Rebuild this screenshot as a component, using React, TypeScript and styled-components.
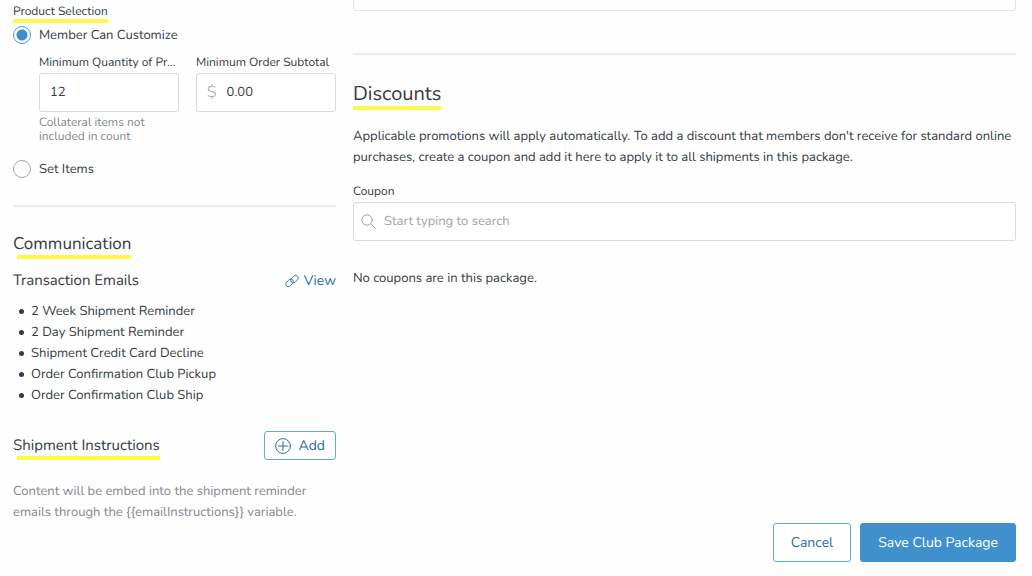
import React from "react";
import styled, { createGlobalStyle } from "styled-components";

const GlobalStyle = createGlobalStyle`
  *, *::before, *::after { box-sizing: border-box; }
  body {
    margin: 0;
    background: #fefefe;
    color: #343c43;
    font-family: "Nunito", "Open Sans", "Noto Sans", sans-serif;
    font-size: 13px;
    line-height: 21px;
    text-rendering: geometricPrecision;
  }
  h2, h3, h4, p, ul, fieldset, legend { margin: 0; padding: 0; border: 0; font-weight: 400; }
  input, button { font: inherit; color: inherit; text-rendering: inherit; }
`;

const Page = styled.main`
  display: flex;
  flex-direction: column;
  min-height: 100vh;
  padding: 0 16px 15px 13px;
`;

const Columns = styled.div`
  display: grid;
  grid-template-columns: repeat(12, minmax(0, 1fr));
  column-gap: 17px;
  align-items: start;
`;

const Column = styled.div<{ $span: number }>`
  grid-column: span ${(p) => p.$span};
  min-width: 0;
`;

const Highlight = styled.span<{ $inset?: number }>`
  position: relative;
  display: inline-block;
  white-space: nowrap;
  &::after {
    content: "";
    position: absolute;
    left: ${(p) => p.$inset ?? 0}px;
    right: 0;
    bottom: -4px;
    height: 4px;
    background: #fdf84a;
  }
`;

const Options = styled.fieldset`
  min-width: 0;
`;

const Legend = styled.legend`
  padding: 5px 0 4px;
  font-size: 12px;
  line-height: 14px;
`;

const Option = styled.label`
  display: flex;
  align-items: center;
  gap: 8px;
  height: 24px;
`;

const Radio = styled.input.attrs({ type: "radio" })`
  appearance: none;
  flex: none;
  width: 18px;
  height: 18px;
  margin: 0;
  border: 1px solid #a3a7aa;
  border-radius: 50%;
  background: #fff;
  &:checked {
    border-color: #4c9ad3;
    background: radial-gradient(circle, #3d8fcc 5px, #fff 6px);
  }
`;

const FieldRow = styled.div`
  display: grid;
  grid-template-columns: repeat(2, minmax(0, 1fr));
  gap: 17px;
  padding: 6px 0 13px 26px;
`;

const Label = styled.label`
  display: block;
  overflow: hidden;
  font-size: 12px;
  line-height: 20px;
  text-overflow: ellipsis;
  white-space: nowrap;
`;

const InputBox = styled.div`
  display: flex;
  align-items: center;
  gap: 10px;
  height: 39px;
  padding: 0 10px;
  border: 1px solid #d9dbdc;
  border-radius: 3px;
  background: #fff;
  color: #a0a4a7;
`;

const Input = styled.input`
  flex: 1;
  width: 100%;
  min-width: 0;
  padding: 0;
  border: 0;
  outline: 0;
  background: transparent;
  color: #343c43;
  &::placeholder { color: #a0a4a7; opacity: 1; }
`;

const SearchBox = styled(InputBox)`
  padding: 0 7px;
  gap: 8px;
`;

const Prefix = styled.span`
  font-size: 16px;
  font-weight: 300;
`;

const Help = styled.p`
  max-width: 120px;
  padding-top: 4px;
  color: #83888c;
  font-size: 12px;
  line-height: 14px;
`;

const Divider = styled.hr<{ $top: number; $bottom: number }>`
  height: 2px;
  margin: ${(p) => p.$top}px 0 ${(p) => p.$bottom}px;
  border: 0;
  background: #ececed;
`;

const Title = styled.h2`
  font-size: 20px;
  line-height: 23px;
`;

const Subtitle = styled.h3`
  font-size: 17px;
  line-height: 20px;
`;

const SmallTitle = styled.h4`
  font-size: 15px;
  line-height: 20px;
`;

const HeadRow = styled.div<{ $top: number }>`
  display: flex;
  align-items: center;
  justify-content: space-between;
  min-height: 29px;
  margin-top: ${(p) => p.$top}px;
`;

const ViewLink = styled.a`
  display: flex;
  align-items: center;
  gap: 5px;
  color: #2d6fa8;
  font-size: 14px;
  text-decoration: none;
`;

const EmailList = styled.ul`
  padding: 6px 0 0 18px;
  list-style: none;
`;

const EmailItem = styled.li`
  display: flex;
  align-items: center;
  &::before {
    content: "";
    width: 5px;
    height: 5px;
    margin: 0 7px 0 -12px;
    border-radius: 50%;
    background: #343c43;
  }
`;

const Muted = styled.p`
  padding-top: 21px;
  color: #83888c;
`;

const Button = styled.button<{ $primary?: boolean; $small?: boolean }>`
  display: inline-flex;
  align-items: center;
  justify-content: center;
  gap: 8px;
  height: ${(p) => (p.$small ? 29 : 39)}px;
  padding: 0 ${(p) => (p.$small ? 10 : 17)}px;
  border: 1px solid ${(p) => (p.$primary ? "#3f90cc" : "#66a9da")};
  border-radius: 3px;
  background: ${(p) => (p.$primary ? "#3f90cc" : "#fff")};
  color: ${(p) => (p.$primary ? "#fff" : "#2d6fa8")};
  font-size: 14px;
  white-space: nowrap;
`;

const PanelEnd = styled.div`
  height: 11px;
  border: 1px solid #e2e4e5;
  border-top: 0;
  border-radius: 0 0 3px 3px;
`;

const Copy = styled.p<{ $top: number }>`
  padding-top: ${(p) => p.$top}px;
`;

const CouponField = styled.div`
  padding-top: 14px;
`;

const Actions = styled.footer`
  display: flex;
  justify-content: flex-end;
  gap: 9px;
  margin-top: auto;
`;

const Icon = styled.svg`
  flex: none;
  fill: none;
  stroke: currentColor;
  stroke-linecap: round;
  stroke-linejoin: round;
`;

const emails = [
  "2 Week Shipment Reminder",
  "2 Day Shipment Reminder",
  "Shipment Credit Card Decline",
  "Order Confirmation Club Pickup",
  "Order Confirmation Club Ship",
];

export default function App() {
  return (
    <>
      <GlobalStyle />
      <Page>
        <Columns>
          <Column $span={4}>
            <Options>
              <Legend><Highlight>Product Selection</Highlight></Legend>
              <Option>
                <Radio name="selection" defaultChecked />
                Member Can Customize
              </Option>
              <FieldRow>
                <div>
                  <Label htmlFor="quantity">Minimum Quantity of Products</Label>
                  <InputBox><Input id="quantity" defaultValue="12" /></InputBox>
                  <Help>Collateral items not included in count</Help>
                </div>
                <div>
                  <Label htmlFor="subtotal">Minimum Order Subtotal</Label>
                  <InputBox>
                    <Prefix>$</Prefix>
                    <Input id="subtotal" defaultValue="0.00" />
                  </InputBox>
                </div>
              </FieldRow>
              <Option>
                <Radio name="selection" />
                Set Items
              </Option>
            </Options>
            <Divider $top={24} $bottom={28} />
            <Subtitle><Highlight $inset={4}>Communication</Highlight></Subtitle>
            <HeadRow $top={11}>
              <SmallTitle>Transaction Emails</SmallTitle>
              <ViewLink href="#emails">
                <Icon width="14" height="14" viewBox="0 0 24 24" strokeWidth="1.5">
                  <path d="M10.3 13.7a4.6 4.6 0 0 1 .7-5.9l4.6-4.6a4.6 4.6 0 0 1 6 .5 4.6 4.6 0 0 1-.2 6.3l-3.9 3.9a4.6 4.6 0 0 1-6.5 0M13.7 10.3a4.6 4.6 0 0 1-.7 5.9l-4.6 4.6a4.6 4.6 0 0 1-6-.5 4.6 4.6 0 0 1 .2-6.3l3.9-3.9a4.6 4.6 0 0 1 6.5 0" />
                </Icon>
                View
              </ViewLink>
            </HeadRow>
            <EmailList>
              {emails.map((name) => <EmailItem key={name}>{name}</EmailItem>)}
            </EmailList>
            <HeadRow $top={25}>
              <SmallTitle><Highlight $inset={4}>Shipment Instructions</Highlight></SmallTitle>
              <Button type="button" $small>
                <Icon width="16" height="16" viewBox="0 0 16 16">
                  <circle cx="8" cy="8" r="7.4" />
                  <path d="M8 3.5v9M3.5 8h9" />
                </Icon>
                Add
              </Button>
            </HeadRow>
            <Muted>
              {"Content will be embed into the shipment reminder emails through the {{emailInstructions}} variable."}
            </Muted>
          </Column>
          <Column $span={8}>
            <PanelEnd />
            <Divider $top={42} $bottom={28} />
            <Title><Highlight>Discounts</Highlight></Title>
            <Copy $top={20}>
              Applicable promotions will apply automatically. To add a discount that members don't receive for standard
              online purchases, create a coupon and add it here to apply it to all shipments in this package.
            </Copy>
            <CouponField>
              <Label htmlFor="coupon">Coupon</Label>
              <SearchBox>
                <Icon width="15" height="15" viewBox="0 0 15 15">
                  <circle cx="6" cy="6" r="5.2" />
                  <path d="M9.8 9.8l4.5 4.5" />
                </Icon>
                <Input id="coupon" placeholder="Start typing to search" />
              </SearchBox>
            </CouponField>
            <Copy $top={27}>No coupons are in this package.</Copy>
          </Column>
        </Columns>
        <Actions>
          <Button type="button">Cancel</Button>
          <Button type="button" $primary>Save Club Package</Button>
        </Actions>
      </Page>
    </>
  );
}
